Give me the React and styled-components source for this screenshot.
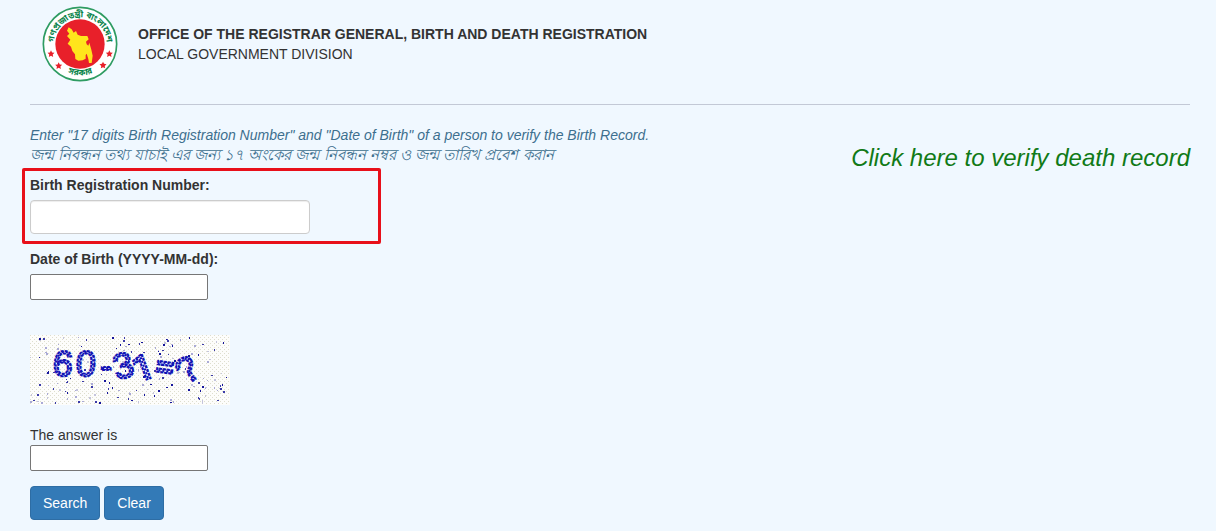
import React from "react";
import styled, { createGlobalStyle } from "styled-components";

const GlobalStyle = createGlobalStyle`
  *, *::before, *::after { box-sizing: border-box; }
  body {
    margin: 0;
    background: #f0f8ff;
    color: #333;
    font-family: "Liberation Sans", Arial, "Noto Sans", sans-serif;
    font-size: 14px;
    line-height: 20px;
  }
`;

const Page = styled.div`
  padding: 6px 26px 10px 30px;
`;

const Header = styled.header`
  display: flex;
  align-items: center;
  gap: 20px;
  padding: 0 12px 22px;
  border-bottom: 1px solid #c3c9d6;
`;

const Emblem = styled.svg`
  flex: none;
  width: 76px;
  height: 76px;
`;

const Office = styled.h1`
  margin: 0;
  font-size: 14px;
  line-height: 20px;
`;

const Division = styled.p`
  margin: 0;
`;

const Intro = styled.div`
  display: flex;
  justify-content: space-between;
  align-items: flex-end;
  margin: 20px 0 10px;
`;

const Hint = styled.p`
  margin: 0;
  color: #3d6f8e;
  font-style: italic;
`;

const Bengali = styled.span`
  display: block;
  height: 20px;
  font-size: 15px;
  white-space: nowrap;
`;

const DeathLink = styled.a`
  color: #117a17;
  font-size: 24px;
  line-height: 26px;
  font-style: italic;
  text-decoration: none;
  white-space: nowrap;
  margin-bottom: -6px;
`;

const Form = styled.form`
  display: flex;
  flex-direction: column;
  align-items: flex-start;
`;

const Field = styled.div`
  position: relative;
  display: flex;
  flex-direction: column;
  align-items: flex-start;
  gap: ${(p) => p.$gap || 0}px;
  margin-bottom: 15px;
`;

const HighlightFrame = styled.div`
  position: absolute;
  inset: -7px auto -10px -8px;
  width: 359px;
  border: 3px solid #e8101a;
  border-radius: 2px;
  pointer-events: none;
`;

const Label = styled.label`
  font-weight: ${(p) => (p.$plain ? 400 : 700)};
`;

const WideInput = styled.input`
  width: 280px;
  height: 34px;
  padding: 6px 12px;
  border: 1px solid #ccc;
  border-radius: 4px;
  background: #fff;
  box-shadow: inset 0 1px 1px rgba(0, 0, 0, 0.075);
  font: inherit;
`;

const PlainInput = styled.input`
  width: 178px;
  height: 26px;
  padding: 1px 2px;
  border: 1px solid #767676;
  border-radius: 2px;
  background: #fff;
  font: inherit;
`;

const CaptchaImage = styled.svg`
  display: block;
  width: 200px;
  height: 70px;
  margin: 20px 0;
`;

const Actions = styled.div`
  display: flex;
  gap: 4px;
`;

const Button = styled.button`
  height: 34px;
  padding: 6px 12px;
  border: 1px solid #2e6da4;
  border-radius: 4px;
  background: #337ab7;
  color: #fff;
  font: inherit;
  cursor: pointer;
`;

const STARS = [
  [45, 161],
  [68, 197],
  [201, 195],
  [220, 161],
];

const starPoints = (cx, cy, r) =>
  Array.from({ length: 10 }, (_, i) => {
    const a = (Math.PI / 5) * i - Math.PI / 2;
    const d = i % 2 ? r * 0.5 : r;
    return `${(cx + d * Math.cos(a)).toFixed(1)},${(cy + d * Math.sin(a)).toFixed(1)}`;
  }).join(" ");

function Seal() {
  return (
    <Emblem viewBox="18 17 228 228" role="img" aria-label="Government seal of Bangladesh">
      <defs>
        <path id="arc-top" d="M57.5 153 A79 79 0 1 1 208.5 153" />
        <path id="arc-bottom" d="M67 198 A94 94 0 0 0 199 198" />
      </defs>
      <circle cx="132" cy="131" r="110" fill="#fff" stroke="#2e9c62" strokeWidth="5" />
      <circle cx="132" cy="131" r="74" fill="#e8202a" />
      <path
        fill="#ffe51c"
        d="M98 81 L107 87 L113 97 L120 92 L125 103 L135 107 L154 107 L158 117 L150 124 L152 132 L157 136 L160 127 L166 148 L170 166 L167 188 L159 188 L157 176 L152 160 L149 164 L149 175 L140 180 L127 181 L118 176 L117 162 L109 152 L105 139 L95 130 L103 118 L93 107 L100 100 L93 91 Z"
      />
      <g fill="#08834a" fontSize="26" fontWeight="700" fontFamily='"Noto Sans Bengali", "Noto Sans", sans-serif'>
        <text textAnchor="middle">
          <textPath href="#arc-top" startOffset="50%">গণপ্রজাতন্ত্রী বাংলাদেশ</textPath>
        </text>
        <text textAnchor="middle">
          <textPath href="#arc-bottom" startOffset="50%">সরকার</textPath>
        </text>
      </g>
      {STARS.map(([x, y]) => (
        <polygon key={x} points={starPoints(x, y, 11)} fill="#e8202a" />
      ))}
    </Emblem>
  );
}

const ARIAL = '"Liberation Sans", Arial, sans-serif';
const ROBOTO = "Roboto, sans-serif";

const GLYPHS = [
  { ch: "6", x: 33, y: 28, turn: 4, font: ARIAL },
  { ch: "0", x: 56, y: 28, turn: 3, font: ARIAL },
  { ch: "-", x: 76, y: 30, turn: -2, font: ARIAL },
  { ch: "3", x: 93, y: 30, turn: -14, font: ARIAL },
  { ch: "1", x: 113, y: 32, turn: -20, font: ROBOTO },
  { ch: "=", x: 135, y: 31, turn: 8, font: ROBOTO },
  { ch: "?", x: 157, y: 34, turn: -36, font: ARIAL },
];

const SPECKS = (() => {
  let seed = 6031;
  const next = () => {
    seed = (seed * 16807) % 2147483647;
    return seed / 2147483647;
  };
  const tones = ["#15159a", "#3b3ba8", "#a9a9d6", "#c4c4dc"];
  return Array.from({ length: 190 }, (_, i) => ({
    x: Math.floor(next() * 197),
    y: Math.floor(next() * 66) + 2,
    w: next() > 0.5 ? 2 : 1,
    h: next() > 0.4 ? 2 : 1,
    fill: tones[i % 4],
  }));
})();

function Captcha() {
  return (
    <CaptchaImage viewBox="0 0 200 70" role="img" aria-label="60-31=?">
      <defs>
        <pattern id="dither" width="4" height="4" patternUnits="userSpaceOnUse">
          <rect width="4" height="4" fill="#fdfdfb" />
          <rect width="1" height="1" fill="#dedece" />
          <rect x="2" y="2" width="1" height="1" fill="#dedece" />
        </pattern>
        <pattern id="weave" width="4" height="4" patternUnits="userSpaceOnUse">
          <rect width="4" height="4" fill="#1212b4" />
          <rect x="0" width="2" height="2" fill="#f0f0ff" />
          <rect x="2" y="2" width="2" height="2" fill="#f0f0ff" />
        </pattern>
      </defs>
      <rect width="200" height="70" fill="url(#dither)" />
      {SPECKS.map((s, i) => (
        <rect key={i} x={s.x} y={s.y} width={s.w} height={s.h} fill={s.fill} />
      ))}
      <g
        fill="url(#weave)"
        fontSize="36"
        fontWeight="500"
        stroke="#1212b4"
        strokeWidth="2"
        strokeDasharray="3 1"
        textAnchor="middle"
      >
        {GLYPHS.map((g) => (
          <text
            key={g.ch}
            transform={`translate(${g.x} ${g.y}) rotate(${g.turn})`}
            y="13"
            fontFamily={g.font}
          >
            {g.ch}
          </text>
        ))}
      </g>
    </CaptchaImage>
  );
}

export default function App() {
  return (
    <>
      <GlobalStyle />
      <Page>
        <Header>
          <Seal />
          <div>
            <Office>OFFICE OF THE REGISTRAR GENERAL, BIRTH AND DEATH REGISTRATION</Office>
            <Division>LOCAL GOVERNMENT DIVISION</Division>
          </div>
        </Header>
        <main>
          <Intro>
            <Hint>
              Enter "17 digits Birth Registration Number" and "Date of Birth" of a person to verify the Birth Record.
              <Bengali lang="bn">
                জন্ম নিবন্ধন তথ্য যাচাই এর জন্য ১৭ অংকের জন্ম নিবন্ধন নম্বর ও জন্ম তারিখ প্রবেশ করান
              </Bengali>
            </Hint>
            <DeathLink href="#death">Click here to verify death record</DeathLink>
          </Intro>
          <Form onSubmit={(e) => e.preventDefault()}>
            <Field $gap={5}>
              <Label htmlFor="brn">Birth Registration Number:</Label>
              <WideInput id="brn" type="text" />
              <HighlightFrame />
            </Field>
            <Field $gap={5}>
              <Label htmlFor="dob">Date of Birth (YYYY-MM-dd):</Label>
              <PlainInput id="dob" type="text" />
            </Field>
            <Captcha />
            <Field>
              <Label htmlFor="answer" $plain>The answer is</Label>
              <PlainInput id="answer" type="text" />
            </Field>
            <Actions>
              <Button type="submit">Search</Button>
              <Button type="reset">Clear</Button>
            </Actions>
          </Form>
        </main>
      </Page>
    </>
  );
}
